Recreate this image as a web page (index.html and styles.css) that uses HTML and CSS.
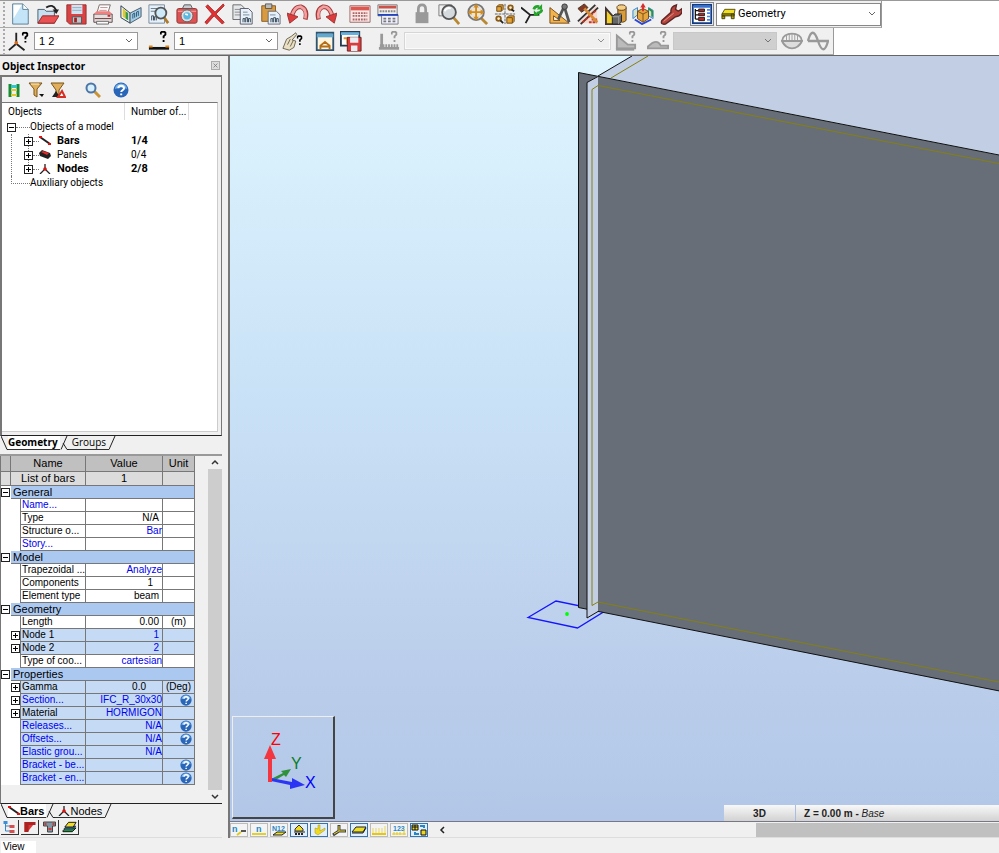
FILE: index.html
```html
<!DOCTYPE html>
<html lang="en">

<head>
    <meta charset="UTF-8">
    <meta name="viewport" content="width=device-width, initial-scale=1.0">
    <title>Structural model - Geometry</title>
    <link rel="stylesheet" href="styles.css">
</head>

<body>
    <!-- shared symbols -->
    <svg class="symbols" aria-hidden="true">
        <symbol id="help" viewBox="0 0 16 16">
            <circle cx="8" cy="8" r="7.5" fill="#2a66b8"/>
            <path d="M2 7a6 5.500 0 0 1 12 0Q8 4 2 7z" fill="#78b2ec"/>
            <path d="M5.300 6.200C5.300 2.800 11 2.800 11 6.200c0 2-2.800 2-2.800 3.800M8.200 11.500v1.800" fill="none" stroke="#fff" stroke-width="2"/>
        </symbol>
        <symbol id="bar" viewBox="0 0 12 10">
            <path d="M1 1L11 8" stroke="#222" stroke-width="2"/>
            <path d="M0 0h3v2H0zM9 7h3v2H9z" fill="#e01010"/>
        </symbol>
        <symbol id="node" viewBox="0 0 12 10">
            <path d="M6 0v5L1 10M6 5l5 5" fill="none" stroke="#222" stroke-width="1.300"/>
            <circle cx="6" cy="5" r="1.800" fill="#e01010"/>
        </symbol>
        <symbol id="doc" viewBox="0 0 24 24">
            <path d="M1 2h9l4 4v12H1z" fill="#e4e8ea" stroke="#666"/>
            <path d="M3 7h7M3 10h8M3 13h7" stroke="#888"/>
            <path d="M9 6h9l4 4v13H9z" fill="#e8f2fa" stroke="#556"/>
            <path d="M12 10h5M12 13h7" stroke="#789"/>
            <path d="M12 21v-4h2v4m1 0v-5h2v5m1 0v-4h2v4" fill="none" stroke="#345"/>
        </symbol>
        <symbol id="asks" viewBox="0 0 8 12">
            <path d="M1 4V2l1-1h3l1 1v2L4 6v2M4 10v2" fill="none" stroke="currentColor" stroke-width="2"/>
        </symbol>
    </svg>

    <header class="toolbars">
        <div class="toolbar">
            <div class="icon-group files">
                <button class="icon" aria-label="New"><svg viewBox="0 0 24 24"><path d="M4 1h11l6 6v16H4z" fill="#c4e4f8" stroke="#567a90"/><path d="M5 2h9L5 17z" fill="#fff"/><path d="M15 1v6h6" fill="#fff" stroke="#567a90"/></svg></button>
                <button class="icon" aria-label="Open"><svg viewBox="0 0 24 24"><path d="M1 22V7h7l2 2h9v13z" fill="#c6e2f2" stroke="#456"/><path d="M1 22l5-8h18l-5 8z" fill="#e85252" stroke="#922"/><path d="M10 5q7-5 11 3" fill="none" stroke="#222" stroke-width="2"/><path d="M17 7h7l-3 5z" fill="#222"/></svg></button>
                <button class="icon" aria-label="Save"><svg viewBox="0 0 24 24"><path d="M2 2h21v21H5l-3-3z" fill="#d94242" stroke="#903030"/><path d="M7 2h12v10H7z" fill="#cfe4f2"/><path d="M8 5h10M8 8h10" stroke="#9ab"/><path d="M8 15h10v7H8z" fill="#bcc4cc" stroke="#555"/><path d="M10 16h3v5h-3z" fill="#a02020"/></svg></button>
                <button class="icon" aria-label="Print"><svg viewBox="0 0 24 24"><path d="M8 2h12l-3 10H5z" fill="#fff" stroke="#766"/><path d="M9 5h8M8 8h8" stroke="#b88"/><path d="M2 12h20v9H2z" fill="#e8dcdc" stroke="#544"/><path d="M2 12l3-3h14l3 3z" fill="#ef8080"/><path d="M3 17h18" stroke="#533"/><path d="M5 20h13v3H5z" fill="#fafafa" stroke="#666"/><path d="M17 14h3" stroke="#d22" stroke-width="2"/></svg></button>
                <button class="icon" aria-label="Screen capture"><svg viewBox="0 0 24 24"><path d="M1 3l10 8v11L1 16z" fill="#eef4f8" stroke="#234"/><path d="M11 11L23 5v10l-12 7z" fill="#a5cce4" stroke="#456"/><path d="M3 6l3 2v9l-3-2z" fill="#e6c820"/><path d="M6 9l3 2v8l-3-2z" fill="#3b9a49"/><path d="M14 17v-5l2-1v5m2-1v-5l2-1v5" fill="none" stroke="#257"/></svg></button>
                <button class="icon" aria-label="Print preview"><svg viewBox="0 0 24 24"><path d="M1 2h17v20H1z" fill="#e4f0fa" stroke="#789"/><path d="M3 6h8M3 9h5" stroke="#678"/><path d="M4 19v-5h2v5m1 0v-4h2v4" fill="none" stroke="#345"/><path d="M17 15l5 7" stroke="#ae7b2c" stroke-width="3"/><circle cx="14" cy="11" r="6" fill="#cee9f8" stroke="#555" stroke-width="2"/></svg></button>
                <button class="icon" aria-label="Camera"><svg viewBox="0 0 24 24"><rect x="1" y="6" width="22" height="16" rx="2" fill="#e25151" stroke="#833"/><path d="M7 6l2-4h7l2 4z" fill="#c8ccd0" stroke="#555"/><path d="M2 9h20" stroke="#f7b0b0"/><circle cx="12" cy="14" r="6.500" fill="#ddd" stroke="#666"/><circle cx="12" cy="14" r="4" fill="#59b8df"/><path d="M10 12l3 1" stroke="#fff" stroke-width="2"/></svg></button>
                <button class="icon" aria-label="Delete"><svg viewBox="0 0 24 24"><path d="M2 4l2-2 8 8 9-9 1 2-9 9 9 9-2 2-9-9-8 9-2-2 8-9z" fill="#e23232" stroke="#a92323"/></svg></button>
                <button class="icon" aria-label="Copy"><svg><use href="#doc"/></svg></button>
                <button class="icon" aria-label="Paste"><svg viewBox="0 0 24 24"><path d="M3 3h15v17H3z" fill="#d99b42" stroke="#865a22"/><path d="M7 1h7v5H7z" fill="#bbb" stroke="#555"/><path d="M10 9h9l4 4v10H10z" fill="#e4f0fa" stroke="#667"/><path d="M12 13h6" stroke="#789"/><path d="M13 21v-4h2v4m1 0v-5h2v5m1 0v-4h2v4" fill="none" stroke="#345"/></svg></button>
                <button class="icon" aria-label="Undo"><svg viewBox="0 0 24 24"><path d="M5 16Q7 4 15 4q8 3 5 14" fill="none" stroke="#a53b3b" stroke-width="5"/><path d="M5 16Q7 4 15 4q7 3 5 13" fill="none" stroke="#f3a0a0" stroke-width="3"/><path d="M0 11l12 4L3 22z" fill="#dd3c3c" stroke="#933"/></svg></button>
                <button class="icon" aria-label="Redo"><svg viewBox="0 0 24 24"><path d="M19 16Q17 4 9 4 1 7 4 18" fill="none" stroke="#a53b3b" stroke-width="5"/><path d="M19 16Q17 4 9 4 2 7 4 17" fill="none" stroke="#f3a0a0" stroke-width="3"/><path d="M24 11l-12 4 9 7z" fill="#dd3c3c" stroke="#933"/></svg></button>
            </div>
            <div class="icon-group">
                <button class="icon" aria-label="Calculations"><svg viewBox="0 0 24 24"><path d="M1 3h22v18H1z" fill="#fae7e5" stroke="#966"/><path d="M2 4h20v4H2z" fill="#dd5850"/><path d="M4 11h16M4 14h16M4 18h16" stroke="#a66" stroke-width="2" stroke-dasharray="2 1"/></svg></button>
                <button class="icon" aria-label="Results table"><svg viewBox="0 0 24 24"><path d="M1 2h21v12H1z" fill="#eee" stroke="#777"/><path d="M2 3h19v3H2z" fill="#cc5248"/><path d="M3 9h18" stroke="#888" stroke-width="2" stroke-dasharray="2 1"/><path d="M5 13h18v10H5z" fill="#eef" stroke="#777"/><path d="M1 13h22" stroke="#24b" stroke-width="2"/><path d="M7 17h14M7 20h14" stroke="#777" stroke-width="2" stroke-dasharray="3 2"/></svg></button>
            </div>
            <button class="icon lock" aria-label="Lock"><svg viewBox="0 0 24 24"><path d="M8 11V7q0-5 4-5t4 5v4" fill="none" stroke="#999" stroke-width="3"/><path d="M5 10h14v12H5z" fill="#999"/></svg></button>
            <div class="icon-group views">
                <button class="icon" aria-label="Zoom window"><svg viewBox="0 0 24 24"><path d="M1 2h14v12H1z" fill="none" stroke="#777"/><path d="M17 16l6 7" stroke="#b98833" stroke-width="3"/><circle cx="12" cy="10" r="7.500" fill="#d5dade" stroke="#555" stroke-width="2"/><path d="M7 9q3-5 7-3" fill="none" stroke="#fff" stroke-width="2"/></svg></button>
                <button class="icon" aria-label="Pan and zoom"><svg viewBox="0 0 24 24"><path d="M16 16l7 7" stroke="#b98833" stroke-width="3"/><circle cx="11" cy="10" r="8.500" fill="#e8e4da" stroke="#777" stroke-width="2"/><path d="M11 3v14M4 10h14" stroke="#d68a17" stroke-width="2"/><path d="M11 1l3 4H8zM11 19l-3-4h6zM2 10l4-3v6zM20 10l-4-3v6z" fill="#d68a17"/></svg></button>
                <button class="icon" aria-label="Views"><svg viewBox="0 0 24 24"><path d="M1 12h22M12 1v22" stroke="#555" stroke-dasharray="3 1"/><path d="M3 4l2-2h5v5L8 9H3zM14 16l2-2h6v6l-2 2h-6z" fill="#e5a638" stroke="#6b4515"/><path d="M3 4h5v5M14 16h6v6" fill="none" stroke="#6b4515"/><circle cx="18" cy="5" r="2.500" fill="#fff1ca" stroke="#8a5a18" stroke-width="2"/><circle cx="5" cy="17" r="2.500" fill="#fff1ca" stroke="#8a5a18" stroke-width="2"/><path d="M19 7l3 2M7 19l3 3" stroke="#222" stroke-width="2"/></svg></button>
                <button class="icon" aria-label="Rotate view"><svg viewBox="0 0 24 24"><path d="M0 5l10 8h10M10 13l-5 9" fill="none" stroke="#222" stroke-width="2"/><path d="M14 7q1-4 6-3M23 7q-1 4-6 4" fill="none" stroke="#25a52c" stroke-width="3"/><path d="M23 1v6h-6zM14 14V8l6 6z" fill="#25a52c"/></svg></button>
                <button class="icon" aria-label="Dimensions"><svg viewBox="0 0 24 24"><path d="M1 5v17h21z" fill="#f0b34d" stroke="#754715"/><path d="M5 14v5h7z" fill="#fff4df" stroke="#754715"/><path d="M16 5l-6 13M17 5l5 16" stroke="#555" stroke-width="3"/><circle cx="17" cy="4" r="3" fill="#777" stroke="#333"/></svg></button>
                <button class="icon" aria-label="Section tools"><svg viewBox="0 0 24 24"><path d="M1 22L22 2v20z" fill="#f3d9d0"/><path d="M1 20L20 2M4 23L23 5" stroke="#333" stroke-width="2"/><path d="M6 21l15-13M13 21h9M16 18h6" stroke="#c43727" stroke-width="2" stroke-dasharray="3 1"/><path d="M1 6l7-5 4 4-7 5z" fill="#833926" stroke="#432"/><path d="M8 6l14 15" stroke="#d78b36" stroke-width="3"/></svg></button>
                <button class="icon" aria-label="Model solids"><svg viewBox="0 0 24 24"><path d="M1 6v17h15z" fill="#efd02d" stroke="#433" stroke-width="2"/><path d="M14 5h9v14q-4 4-9 0z" fill="#d99c3b" stroke="#593819"/><ellipse cx="18" cy="5" rx="5" ry="3" fill="#f5cf83" stroke="#593819"/><path d="M8 15l3-3h7v8l-3 3H8z" fill="#666" stroke="#222"/><path d="M8 15h7v8M15 15l3-3" fill="none" stroke="#aaa"/></svg></button>
                <button class="icon" aria-label="3D axes"><svg viewBox="0 0 24 24"><path d="M1 8l5-3v8l-5 4zM18 5l5 3v9l-5-3z" fill="#cfe3cf" stroke="#347ed0"/><path d="M18 6l4 3v6" fill="none" stroke="#2c9140" stroke-width="2"/><path d="M3 18l8 5 10-5" fill="none" stroke="#2546d8" stroke-width="2"/><path d="M6 9l6-3 6 3v8l-6 4-6-4z" fill="#e5a640" stroke="#74420b"/><path d="M6 9l6 3 6-3M12 12v9" fill="none" stroke="#784a17"/><path d="M12 9V3" stroke="#d62c2c" stroke-width="2"/><path d="M12 0l3 5H9z" fill="#d62c2c"/></svg></button>
                <button class="icon" aria-label="Preferences"><svg viewBox="0 0 24 24"><path d="M2 19L12 10Q11 4 18 2l-1 5 3 2 4-3q1 8-7 9L6 23q-6 1-4-4z" fill="#b7453d" stroke="#5e2424" stroke-width="1.500"/><path d="M4 20l11-9" stroke="#e49990"/></svg></button>
            </div>
            <button class="icon pressed" aria-label="Object Inspector" aria-pressed="true"><svg viewBox="0 0 24 24"><path d="M1 1h22v22H1z" fill="#fff" stroke="#123a83" stroke-width="2"/><path d="M2 3h20" stroke="#3572cf" stroke-width="3"/><path d="M4 6v12M4 8h4M4 13h4M4 18h4" fill="none" stroke="#111" stroke-width="1.500"/><path d="M8 6h7v3H8zM8 11h7v3H8zM8 16h7v4H8z" fill="#b32828" stroke="#111"/><path d="M18 7h4M18 11h4M18 15h4M18 19h4" stroke="#5084e5" stroke-width="2"/></svg></button>
            <div class="layout-picker">
                <svg viewBox="0 0 16 12"><path d="M4 1h11l-1 5H1z" fill="#f0df22" stroke="#554d0a"/><path d="M1 6h13v2H1zM1 8h3v3H1zM11 6h3v5h-3z" fill="#b8a611" stroke="#453e05"/></svg>
                <select aria-label="Layout"><option>Geometry</option></select>
            </div>
        </div>
        <div class="toolbar selection">
            <button class="icon" aria-label="Select nodes"><svg viewBox="0 0 24 24"><path d="M9 3v12L1 22M9 15l9 7" fill="none" stroke="#222" stroke-width="2"/><circle cx="9" cy="14" r="2" fill="#d76b1b"/><use href="#asks" x="15" y="2" width="8" height="12"/></svg></button>
            <select class="combo" aria-label="Nodes"><option>1 2</option></select>
            <button class="icon sep" aria-label="Select bars"><svg viewBox="0 0 24 24"><path d="M1 20h22" stroke="#111" stroke-width="3"/><path d="M1 18h4M19 18h4" stroke="#df891c" stroke-width="2"/><use href="#asks" x="13" y="1" width="8" height="12"/></svg></button>
            <select class="combo" aria-label="Bars"><option>1</option></select>
            <button class="icon" aria-label="Select objects"><svg viewBox="0 0 24 24"><path d="M1 20l4-10 5-3 5-4 1 2-5 6 4 1-2 7-5 3z" fill="#e8dfc4" stroke="#665f4c"/><path d="M6 16l3-6M9 18l3-6" stroke="#665f4c"/><use href="#asks" x="16" y="5" width="7" height="12"/></svg></button>
            <button class="icon sep" aria-label="View window"><svg viewBox="0 0 24 24"><path d="M3 3h18v19H3z" fill="#fff5df" stroke="#2d5370" stroke-width="2"/><path d="M3 6h18" stroke="#63a9cf" stroke-width="4"/><path d="M7 21v-4l5-4 5 4v4M7 18h10" fill="none" stroke="#b56d17" stroke-width="2"/></svg></button>
            <button class="icon" aria-label="Save view"><svg viewBox="0 0 24 24"><path d="M1 2h20v15H1z" fill="#fff" stroke="#253b50" stroke-width="2"/><path d="M1 4h20" stroke="#66b2dd" stroke-width="3"/><path d="M4 9h4v6" stroke="#e59627" stroke-width="2" fill="none"/><path d="M8 8h15v15H8z" fill="#d93c3c" stroke="#622"/><path d="M11 8h9v6h-9zM12 17h7v6h-7z" fill="#e8edf2"/></svg></button>
            <button class="icon muted sep-wide" aria-label="Load query"><svg viewBox="0 0 24 24"><path d="M4 4v15M1 20h22" fill="none" stroke="currentColor" stroke-width="3"/><path d="M2 17h20" stroke="currentColor" stroke-width="3" stroke-dasharray="2 1"/><use href="#asks" x="14" y="1" width="8" height="12"/></svg></button>
            <select class="combo case" aria-label="Load case" disabled><option></option></select>
            <button class="icon muted" aria-label="Diagram query"><svg viewBox="0 0 24 24"><path d="M2 6v14h20v-4H14z" fill="#bbb" stroke="currentColor" stroke-width="2"/><path d="M1 21h20" stroke="currentColor" stroke-width="3"/><use href="#asks" x="15" y="1" width="8" height="12"/></svg></button>
            <button class="icon muted sep" aria-label="Mode query"><svg viewBox="0 0 24 24"><path d="M1 20h22v-3h-8q-3-6-9-3l-5 4z" fill="#bbb" stroke="currentColor" stroke-width="2"/><use href="#asks" x="14" y="1" width="8" height="12"/></svg></button>
            <select class="combo mode" aria-label="Mode" disabled><option></option></select>
            <button class="icon muted" aria-label="Deformation"><svg viewBox="0 0 24 24"><ellipse cx="12" cy="11" rx="10.500" ry="7" fill="none" stroke="currentColor" stroke-width="2"/><path d="M1 12h22q-4 8-11 8T1 12z" fill="#ddd" stroke="currentColor" stroke-width="2"/><path d="M6 6v6M9 4v8M12 4v8M15 4v8M18 6v6" stroke="currentColor"/></svg></button>
            <button class="icon muted" aria-label="Vibration"><svg viewBox="0 0 24 24"><path d="M1 12q5-18 11 0t11 0H1" fill="none" stroke="currentColor" stroke-width="2.500"/></svg></button>
        </div>
    </header>

    <main class="workspace">
        <aside class="sidebar">
            <div class="panel-title">
                <h1>Object Inspector</h1>
                <button class="close" aria-label="Close"><svg viewBox="0 0 9 9"><path d="M2 2l5 5M7 2L2 7" stroke="#777"/></svg></button>
            </div>

            <section class="inspector">
                <div class="inspector-tools">
                    <button aria-label="Find in model"><svg viewBox="0 0 16 16"><path d="M4 2v13M12 2v13" stroke="#178d35" stroke-width="3"/><path d="M5 3h6v3H5z" fill="#32c5d0"/><path d="M5 7h6v2H5zM5 12h6v2H5z" fill="#e5c82a"/></svg></button>
                    <button aria-label="Filter"><svg viewBox="0 0 16 16"><path d="M1 1h13l-5 6v8l-3-2V7z" fill="#dfaf5b" stroke="#7c5417"/><path d="M3 2h8" stroke="#fff1bd"/><path d="M11 12h5l-2 3z" fill="#111"/></svg></button>
                    <button aria-label="Clear filter"><svg viewBox="0 0 16 16"><path d="M1 1h13L9 8v5H6V8z" fill="#dfaf5b" stroke="#7c5417"/><path d="M2 15l4-6 4 6z" fill="#222"/><path d="M8 15l4-6 3 6z" fill="#fff" stroke="#d32f25" stroke-width="2"/></svg></button>
                    <button class="find" aria-label="Search"><svg viewBox="0 0 16 16"><path d="M9 9l6 6" stroke="#c99434" stroke-width="3"/><circle cx="6" cy="6" r="4.500" fill="#d8efff" stroke="#4c76a5" stroke-width="2"/></svg></button>
                    <button class="help" aria-label="Help"><svg><use href="#help"/></svg></button>
                </div>
                <div class="tree">
                    <div class="tree-head"><span>Objects</span><span>Number of...</span></div>
                    <ul class="tree-list">
                        <li>
                            <div class="tree-row"><button class="toggle open" aria-label="Collapse model"></button><i class="dots wide"></i><span>Objects of a model</span></div>
                            <ul class="branch">
                                <li class="tree-row strong"><button class="toggle" aria-label="Expand bars"></button><i class="dots"></i><svg><use href="#bar"/></svg><span class="kind">Bars</span><span>1/4</span></li>
                                <li class="tree-row"><button class="toggle" aria-label="Expand panels"></button><i class="dots"></i><svg viewBox="0 0 12 10"><path d="M0 3l3-3 8 3 1 3-3 3-8-3z" fill="#222"/><path d="M2 2l2-1 6 2-2 2z" fill="#e52929"/></svg><span class="kind">Panels</span><span>0/4</span></li>
                                <li class="tree-row strong"><button class="toggle" aria-label="Expand nodes"></button><i class="dots"></i><svg><use href="#node"/></svg><span class="kind">Nodes</span><span>2/8</span></li>
                            </ul>
                        </li>
                        <li class="tree-row last"><i class="dots elbow"></i><span>Auxiliary objects</span></li>
                    </ul>
                </div>
            </section>

            <nav class="tabs">
                <svg viewBox="0 0 7 14"><path d="M0 0l6 13.500h1"/></svg><button class="active">Geometry</button><svg class="joint" viewBox="0 0 9 14"><path d="M7 0L1 13.500M3 7l4 6.500h2"/></svg><button>Groups</button><svg viewBox="0 0 7 14"><path d="M6 0L0 13.500"/></svg>
            </nav>

            <section class="properties">
                <div class="props-scroll">
                    <table>
                        <colgroup><col class="c-group"><col class="c-toggle"><col class="c-name"><col class="c-value"><col class="c-unit"></colgroup>
                        <thead>
                            <tr><th></th><th colspan="2">Name</th><th>Value</th><th>Unit</th></tr>
                            <tr class="list"><td></td><td colspan="2">List of bars</td><td>1</td><td></td></tr>
                        </thead>
                        <tbody>
                            <tr class="group"><td><button class="toggle open" aria-label="Collapse General"></button></td><th colspan="4">General</th></tr>
                            <tr class="link"><td></td><td></td><td>Name...</td><td></td><td></td></tr>
                            <tr><td></td><td></td><td>Type</td><td class="inset">N/A</td><td></td></tr>
                            <tr><td></td><td></td><td>Structure o...</td><td class="blue">Bar</td><td></td></tr>
                            <tr class="link"><td></td><td></td><td>Story...</td><td></td><td></td></tr>
                            <tr class="group"><td><button class="toggle open" aria-label="Collapse Model"></button></td><th colspan="4">Model</th></tr>
                            <tr><td></td><td></td><td>Trapezoidal ...</td><td class="blue">Analyze</td><td></td></tr>
                            <tr><td></td><td></td><td>Components</td><td class="inset far">1</td><td></td></tr>
                            <tr><td></td><td></td><td>Element type</td><td class="inset">beam</td><td></td></tr>
                            <tr class="group"><td><button class="toggle open" aria-label="Collapse Geometry"></button></td><th colspan="4">Geometry</th></tr>
                            <tr><td></td><td></td><td>Length</td><td class="inset">0.00</td><td>(m)</td></tr>
                            <tr class="shade"><td></td><td><button class="toggle" aria-label="Expand Node 1"></button></td><td>Node 1</td><td class="blue inset">1</td><td></td></tr>
                            <tr class="shade"><td></td><td><button class="toggle" aria-label="Expand Node 2"></button></td><td>Node 2</td><td class="blue inset">2</td><td></td></tr>
                            <tr><td></td><td></td><td>Type of coo...</td><td class="blue">cartesian</td><td></td></tr>
                            <tr class="group"><td><button class="toggle open" aria-label="Collapse Properties"></button></td><th colspan="4">Properties</th></tr>
                            <tr class="shade"><td></td><td><button class="toggle" aria-label="Expand Gamma"></button></td><td>Gamma</td><td class="inset farther">0.0</td><td>(Deg)</td></tr>
                            <tr class="shade link"><td></td><td><button class="toggle" aria-label="Expand Section"></button></td><td>Section...</td><td>IFC_R_30x30</td><td class="info"><svg><use href="#help"/></svg></td></tr>
                            <tr class="shade"><td></td><td><button class="toggle" aria-label="Expand Material"></button></td><td>Material</td><td class="blue">HORMIGON</td><td></td></tr>
                            <tr class="shade link"><td></td><td></td><td>Releases...</td><td>N/A</td><td class="info"><svg><use href="#help"/></svg></td></tr>
                            <tr class="shade link"><td></td><td></td><td>Offsets...</td><td>N/A</td><td class="info"><svg><use href="#help"/></svg></td></tr>
                            <tr class="shade link"><td></td><td></td><td>Elastic grou...</td><td>N/A</td><td></td></tr>
                            <tr class="shade link"><td></td><td></td><td>Bracket - be...</td><td></td><td class="info"><svg><use href="#help"/></svg></td></tr>
                            <tr class="shade link"><td></td><td></td><td>Bracket - en...</td><td></td><td class="info"><svg><use href="#help"/></svg></td></tr>
                        </tbody>
                    </table>
                </div>
                <div class="scrollbar">
                    <button aria-label="Scroll up"><svg viewBox="0 0 8 6"><path d="M1 5l3-3 3 3"/></svg></button>
                    <div class="thumb"></div>
                    <button aria-label="Scroll down"><svg viewBox="0 0 8 6"><path d="M1 1l3 3 3-3"/></svg></button>
                </div>
            </section>

            <nav class="tabs lower">
                <svg viewBox="0 0 7 14"><path d="M0 0l6 13.500h1"/></svg><button class="active"><svg class="mark"><use href="#bar"/></svg>Bars</button><svg class="joint" viewBox="0 0 9 14"><path d="M7 0L1 13.500M3 7l4 6.500h2"/></svg><button><svg class="mark"><use href="#node"/></svg>Nodes</button><svg viewBox="0 0 7 14"><path d="M6 0L0 13.500"/></svg>
            </nav>
            <div class="modes">
                <button aria-label="Tree"><svg viewBox="0 0 14 12"><path d="M3 1v9h5M3 5h5" fill="none" stroke="#38c"/><path d="M1 0h4v3H1z" fill="#3a8fd6"/><path d="M7 4h5v3H7zM7 9h5v3H7z" fill="#d45050"/></svg></button>
                <button aria-label="Connections"><svg viewBox="0 0 14 12"><path d="M2 1h11L5 11H2z" fill="#d33"/><path d="M2 1h11v3H6v7H2z" fill="#a22"/></svg></button>
                <button aria-label="Profiles"><svg viewBox="0 0 14 12"><path d="M1 1h12v4h-3v6H5V5H1z" fill="#8195a5" stroke="#444"/><path d="M2 2h2v2H2zM10 2h2v2h-2zM6 7h3v2H6z" fill="#d33"/></svg></button>
                <button aria-label="Layers"><svg viewBox="0 0 16 12"><path d="M1 10l3-3h11l-4 4H1z" fill="#278c3a" stroke="#111"/><path d="M2 8l3-3h10l-4 3z" fill="#3467c9" stroke="#111" stroke-width=".5"/><path d="M3 6l4-5h8l-3 5z" fill="#f1dd25" stroke="#111"/></svg></button>
            </div>
        </aside>

        <section class="viewport">
            <div class="scene">
                <svg class="model" viewBox="230 56 769 766" preserveAspectRatio="xMinYMin slice" role="img" aria-label="3D view of the wall panel">
                    <path d="M528 617.500L556 601l49 10-27.500 17z" fill="none" stroke="#1414ff" stroke-width="1.300"/>
                    <circle cx="567" cy="614" r="1.900" fill="#0f0"/>
                    <!-- slab and wall, both run past the right edge -->
                    <path d="M598 76l34-20h417v108.300z" fill="#c2cee3"/>
                    <path d="M598 76l34-20" fill="none" stroke="#111"/>
                    <path d="M578.500 72.500l470.500 92.300v536L578.500 607.500z" fill="#686e77" stroke="#111"/>
                    <path d="M587 82.500l11-6.500v535.500l-11 6.500z" fill="#c2cee3"/>
                    <path d="M598 76.500l-11 6V618l11-6.500" fill="none" stroke="#111"/>
                    <path d="M611 78l37-22M999 163.500L598 85.500l-6 4v516l6-3.500 401 80" fill="none" stroke="#85800e"/>
                </svg>
                <div class="axes">
                    <svg viewBox="0 0 100 100">
                        <path d="M38 62l12-6-2-2 10-2-5 8-2-2-10 6z" fill="#2f923b"/>
                        <path d="M38 61l21 4v-4l13 7-15 4v-4l-19-4z" fill="#2d35f5"/>
                        <path d="M35 65V42h-4l6-14 6 14h-4v23z" fill="#f33640"/>
                        <text x="38" y="28" fill="#f00">Z</text>
                        <text x="58" y="52" fill="#0a7d1c">Y</text>
                        <text x="72" y="71" fill="#00f">X</text>
                    </svg>
                </div>
                <div class="readout"><span>3D</span><span>Z = 0.00 m - <em>Base</em></span></div>
            </div>
            <div class="display-bar">
                <button aria-label="Node numbers"><svg viewBox="0 0 16 12"><text x="1" y="8">n</text><path d="M6 11l4-3" stroke="#dfcb20" stroke-width="2"/><path d="M10 7h5" stroke="#555" stroke-width="2"/></svg></button>
                <button aria-label="Bar numbers"><svg viewBox="0 0 16 12"><text x="5" y="8">n</text><path d="M1 10h14" stroke="#e4d02a" stroke-width="2"/></svg></button>
                <button aria-label="Panel numbers"><svg viewBox="0 0 16 12"><text x="1" y="7" class="small">N12</text><path d="M2 11l4-3h9l-4 3z" fill="#eee12a" stroke="#222"/></svg></button>
                <button class="on" aria-label="Supports"><svg viewBox="0 0 16 12"><path d="M4 7V5l4-4 4 4v2z" fill="#efda20" stroke="#333"/><path d="M3 8h11" stroke="#222"/><path d="M4 10h9" stroke="#222" stroke-width="2" stroke-dasharray="2 1"/></svg></button>
                <button class="on" aria-label="Section shapes"><svg viewBox="0 0 16 12"><path d="M4 4l3 1V1h2v6l5-3v2l-7 5-3-2z" fill="#efda20" stroke="#a89010" stroke-width=".5"/></svg></button>
                <button aria-label="Local systems"><svg viewBox="0 0 16 12"><path d="M8 1v6l-6 4M8 7h7" fill="none" stroke="#444" stroke-width="3"/><path d="M8 2v5l-5 3M8 7h6" fill="none" stroke="#e2ce25"/></svg></button>
                <button class="on" aria-label="Panel thickness"><svg viewBox="0 0 16 12"><path d="M1 8l4-5h10l-3 5z" fill="#eedf22" stroke="#222"/><path d="M1 9h11l3-5" fill="none" stroke="#222"/></svg></button>
                <button aria-label="Load symbols"><svg viewBox="0 0 16 12"><path d="M2 9V4m3 5V4m3 5V4m3 5V4m3 5V2" stroke="#ead760"/><path d="M1 10h14" stroke="#e6c714" stroke-width="2"/></svg></button>
                <button aria-label="Load values"><svg viewBox="0 0 16 12"><text x="2" y="7" class="small">123</text><path d="M1 10h14M3 8v3m3-3v3m3-3v3m4-6v6" stroke="#e6c714"/></svg></button>
                <button class="on" aria-label="Display attributes"><svg viewBox="0 0 16 12"><path d="M1 1h6v5H1zM10 6h5v5h-5z" fill="#e9d722" stroke="#111"/><path d="M1 3h6M4 1v5" stroke="#111"/><path d="M9 2h4v2M8 10H4V8" fill="none" stroke="#2387c9" stroke-width="2"/></svg></button>
                <div class="h-scroll">
                    <button aria-label="Scroll left"><svg viewBox="0 0 6 8"><path d="M5 1L2 4l3 3" fill="none" stroke="#222" stroke-width="1.500"/></svg></button>
                    <div class="h-thumb"></div>
                </div>
            </div>
        </section>
    </main>

    <footer class="status"><a href="#view">View</a></footer>
</body>

</html>
```

FILE: styles.css
```css
* {
    margin: 0;
    padding: 0;
    box-sizing: border-box;
}

body {
    height: 100vh;
    display: flex;
    flex-direction: column;
    overflow: hidden;
    font-family: "Liberation Sans", Arial, sans-serif;
    font-size: 10px;
    line-height: 12px;
    color: #000;
    background: #f0f0f0;
}

button {
    display: flex;
    align-items: center;
    justify-content: center;
    flex: none;
    font: inherit;
    color: inherit;
    background: none;
    border: none;
}

svg {
    display: block;
    flex: none;
}

ul {
    list-style: none;
}

.symbols {
    position: absolute;
    width: 0;
    height: 0;
}

/* toolbars */
.toolbars {
    flex: none;
    background: #fff;
    border-top: 1px solid #999;
    border-bottom: 1px solid #666;
}

.toolbar {
    width: fit-content;
    height: 27px;
    display: flex;
    align-items: center;
    padding-left: 9px;
    background: #f0f0f0;
    border-right: 1px solid #999;
    border-bottom: 1px solid #aaa;
    background-image: radial-gradient(circle, #aaa 1px, transparent 1px);
    background-size: 4px 4px;
    background-repeat: repeat-y;
    background-position: 2px 0;
}

.icon {
    width: 22px;
    height: 22px;
}

.icon svg {
    width: 22px;
    height: 22px;
}

.icon-group {
    display: flex;
    justify-content: space-between;
    width: 50px;
    margin-right: 12px;
}

.files {
    width: 328px;
}

.lock {
    margin-right: 5px;
}

.views {
    width: 244px;
    margin-right: 8px;
}

.pressed {
    width: 24px;
    height: 24px;
    background: #dce6f2;
    border: 1px solid #888;
}

.pressed svg {
    width: 20px;
    height: 20px;
}

.layout-picker {
    display: flex;
    align-items: center;
    width: 165px;
    height: 23px;
    margin-left: 2px;
    padding-left: 4px;
    background: #fff;
    border: 1px solid #888;
}

.layout-picker svg {
    width: 15px;
    height: 12px;
}

select {
    appearance: none;
    font: inherit;
    font-size: 11px;
    color: #000;
    background: #fff url("data:image/svg+xml,%3Csvg xmlns='http://www.w3.org/2000/svg' width='8' height='6'%3E%3Cpath d='M1 1l3 3 3-3' fill='none' stroke='%23666'/%3E%3C/svg%3E") no-repeat right 4px center;
    border: none;
}

.layout-picker select {
    flex: 1;
    padding-left: 2px;
    font-family: Roboto, sans-serif;
}

.selection {
    gap: 4px;
    padding-left: 8px;
    padding-right: 4px;
}

.combo {
    width: 104px;
    height: 18px;
    padding-left: 4px;
    border: 1px solid #999;
}

.combo.case {
    width: 207px;
    background-color: #f0f0f0;
    border: 2px solid #fff;
    outline: 1px solid #ccc;
    outline-offset: -1px;
    opacity: 0.7;
}

.combo.mode {
    background-color: #ccc;
    border-color: #c4c4c4;
    opacity: 0.9;
}

.sep {
    margin-left: 6px;
}

.sep-wide {
    margin-left: 12px;
}

.muted {
    color: #999;
}

/* left side */
.workspace {
    flex: 1;
    min-height: 0;
    display: flex;
}

.sidebar {
    width: 230px;
    flex: none;
    display: flex;
    flex-direction: column;
    padding-right: 6px;
    border-right: 2px solid #777;
}

.panel-title {
    height: 19px;
    flex: none;
    display: flex;
    align-items: center;
    justify-content: space-between;
    padding: 0 2px;
}

h1 {
    font-family: "Noto Sans", sans-serif;
    font-size: 10px;
    line-height: 14px;
}

.close {
    width: 9px;
    height: 9px;
    background: #ddd;
    border: 1px solid #aaa;
}

.inspector {
    flex: 360 0 0;
    min-height: 0;
    display: flex;
    flex-direction: column;
    border: 1px solid #777;
    border-width: 2px 1px 1px 2px;
    border-bottom-color: #222;
}

.inspector-tools {
    height: 25px;
    flex: none;
    display: flex;
    align-items: center;
    gap: 6px;
    padding-left: 4px;
}

.inspector-tools button,
.inspector-tools svg {
    width: 16px;
    height: 16px;
}

.inspector-tools .find {
    margin-left: 13px;
}

.inspector-tools .help {
    margin-left: 6px;
}

.tree {
    flex: 1;
    margin: 0 3px 3px 0;
    background: #fff;
    border-top: 1px solid #777;
    border-right: 1px solid #ccc;
    border-bottom: 1px solid #ccc;
    font-family: Roboto, sans-serif;
}

.tree-head {
    display: grid;
    grid-template-columns: 123px 64px;
    height: 17px;
    line-height: 17px;
    white-space: nowrap;
}

.tree-head span {
    padding-left: 6px;
    border-right: 1px solid #ddd;
}

.tree-list {
    padding-left: 5px;
}

.tree-row {
    height: 14px;
    display: flex;
    align-items: center;
}

.branch {
    margin-left: 4px;
    border-left: 1px dotted #777;
    background: repeating-linear-gradient(#777 0 1px, transparent 1px 2px) 16px 0 / 1px 38px no-repeat;
}

.branch .tree-row {
    padding-left: 12px;
}

.branch svg {
    width: 12px;
    height: 10px;
}

.kind {
    width: 80px;
    padding-left: 6px;
}

.strong {
    font-weight: bold;
    font-size: 11px;
}

.toggle {
    width: 9px;
    height: 9px;
    border: 1px solid #222;
    background: linear-gradient(#000, #000) center / 5px 1px no-repeat, linear-gradient(#000, #000) center / 1px 5px no-repeat, #fff;
}

.toggle.open {
    background: linear-gradient(#000, #000) center / 5px 1px no-repeat, #fff;
}

.dots {
    width: 6px;
    border-top: 1px dotted #777;
}

.dots.wide {
    width: 14px;
}

.dots.elbow {
    width: 19px;
    height: 8px;
    align-self: flex-start;
    margin-left: 4px;
    border-top: none;
    border-left: 1px dotted #777;
    border-bottom: 1px dotted #777;
}

.tabs {
    height: 20px;
    flex: none;
    display: flex;
    align-items: flex-start;
    padding-left: 1px;
    border-bottom: 2px solid #999;
    font-family: "Open Sans", sans-serif;
}

.tabs svg {
    width: 7px;
    height: 14px;
    fill: none;
    stroke: #222;
}

.tabs svg.joint {
    width: 9px;
}

.tabs button {
    height: 14px;
    padding: 0 3px;
    border-bottom: 1px solid #333;
}

.tabs .active {
    padding: 0 2px 0 0;
    font-weight: bold;
    background: #fff;
}

.properties {
    flex: 349 0 0;
    min-height: 0;
    display: flex;
    justify-content: space-between;
    border-left: 1px solid #777;
    border-bottom: 1px solid #222;
}

.props-scroll {
    overflow: hidden;
}

table {
    width: 194px;
    table-layout: fixed;
    border-collapse: separate;
    border-spacing: 0;
    background: #fff;
}

.c-group {
    width: 10px;
}

.c-toggle {
    width: 10px;
}

.c-name {
    width: 65px;
}

.c-value {
    width: 77px;
}

.c-unit {
    width: 32px;
}

td,
th {
    height: 13px;
    line-height: 12px;
    font-weight: normal;
    white-space: nowrap;
}

thead th,
thead td {
    height: 16px;
    font-size: 11px;
    text-align: center;
    background: #c0c0c0;
    border-right: 1px solid #777;
    border-bottom: 1px solid #777;
}

thead .list td {
    height: 14px;
    background: #dcdcdc;
}

tbody td:nth-child(n+3) {
    border-right: 1px solid #777;
    border-bottom: 1px solid #777;
}

tbody td:nth-child(2) {
    border-right: 1px solid #777;
}

tbody td:nth-child(3) {
    padding-left: 1px;
}

tbody td:nth-child(4) {
    text-align: right;
}

tbody td:nth-child(5) {
    text-align: center;
}

tbody .inset {
    padding-right: 3px;
}

tbody .far {
    padding-right: 9px;
}

tbody .farther {
    padding-right: 16px;
}

.group th {
    padding-left: 2px;
    font-size: 11px;
    text-align: left;
    background: #abc8f0;
    border-right: 1px solid #777;
    border-bottom: 1px solid #777;
}

.shade td:nth-child(n+3) {
    background: #c5daf5;
}

.link td,
tbody .blue {
    color: #0000f0;
}

table .toggle {
    width: 9px;
    height: 9px;
}

.info svg {
    width: 12px;
    height: 12px;
    margin-left: auto;
    margin-right: 2px;
}

.scrollbar {
    width: 14px;
    display: flex;
    flex-direction: column;
}

.scrollbar button {
    height: 13px;
}

.scrollbar svg {
    width: 8px;
    height: 6px;
    fill: none;
    stroke: #333;
    stroke-width: 1.5;
}

.thumb {
    flex: 1;
    background: #cdcdcd;
}

.tabs.lower {
    height: 15px;
    border-bottom: none;
    font-family: "Liberation Sans", Arial, sans-serif;
    font-size: 11px;
}

.tabs svg.mark {
    width: 12px;
    height: 10px;
    stroke: none;
}

.modes {
    height: 19px;
    flex: none;
    display: flex;
    gap: 2px;
    padding: 1px 1px 3px;
    border-bottom: 1px solid #ddd;
}

.modes button {
    width: 18px;
    height: 15px;
    border-right: 1px solid #333;
    border-bottom: 1px solid #333;
}

.modes svg {
    width: 15px;
    height: 12px;
}

/* 3D view */
.viewport {
    flex: 1;
    min-width: 0;
    display: flex;
    flex-direction: column;
}

.scene {
    flex: 1;
    min-height: 0;
    position: relative;
    overflow: hidden;
    background: linear-gradient(#dff6ff, #c9e1f6 45%, #bfd3ee 70%, #b2c6e7);
    border-bottom: 1px solid #778;
}

.model {
    width: 100%;
    height: 100%;
}

.axes {
    position: absolute;
    left: 2px;
    bottom: 2px;
    width: 103px;
    height: 103px;
    border: 2px solid #444;
    border-top: 1px solid #eee;
    border-left: 1px solid #eee;
}

.axes svg {
    width: 100px;
    height: 100px;
    font-family: "Liberation Sans", Arial, sans-serif;
    font-size: 16px;
}

.readout {
    position: absolute;
    right: 0;
    bottom: 0;
    width: 275px;
    height: 16px;
    display: flex;
    line-height: 18px;
    font-weight: bold;
    color: #222;
    background: linear-gradient(#f8f8f8, #d2d2d2);
}

.readout em {
    font-weight: normal;
}

.readout span:first-child {
    width: 72px;
    text-align: center;
    border-right: 1px solid #a9bfdd;
}

.readout span:last-child {
    padding-left: 8px;
}

.display-bar {
    height: 16px;
    flex: none;
    display: flex;
    align-items: center;
    gap: 2px;
    border-bottom: 1px solid #ddd;
}

.display-bar > button {
    width: 18px;
    height: 14px;
    background: #f4f4f4;
    border: 1px solid #bbb;
}

.display-bar > .on {
    background: #e2effa;
    border-color: #3574b0;
}

.display-bar > button svg {
    width: 16px;
    height: 12px;
    overflow: visible;
}

.display-bar text {
    fill: #2387c9;
    font-size: 9px;
    font-weight: bold;
}

.display-bar .small {
    font-size: 7px;
}

.h-scroll {
    flex: 1;
    display: flex;
    justify-content: space-between;
    height: 14px;
    margin-left: 4px;
}

.h-scroll button {
    width: 16px;
}

.h-scroll button svg {
    width: 6px;
    height: 8px;
}

.h-thumb {
    width: 43%;
    background: #c0c0c0;
}

.status {
    height: 15px;
    flex: none;
    padding: 3px 1px 0;
}

.status a {
    display: block;
    width: 35px;
    height: 12px;
    padding-left: 2px;
    color: #000;
    text-decoration: none;
    background: #fff;
}
```
